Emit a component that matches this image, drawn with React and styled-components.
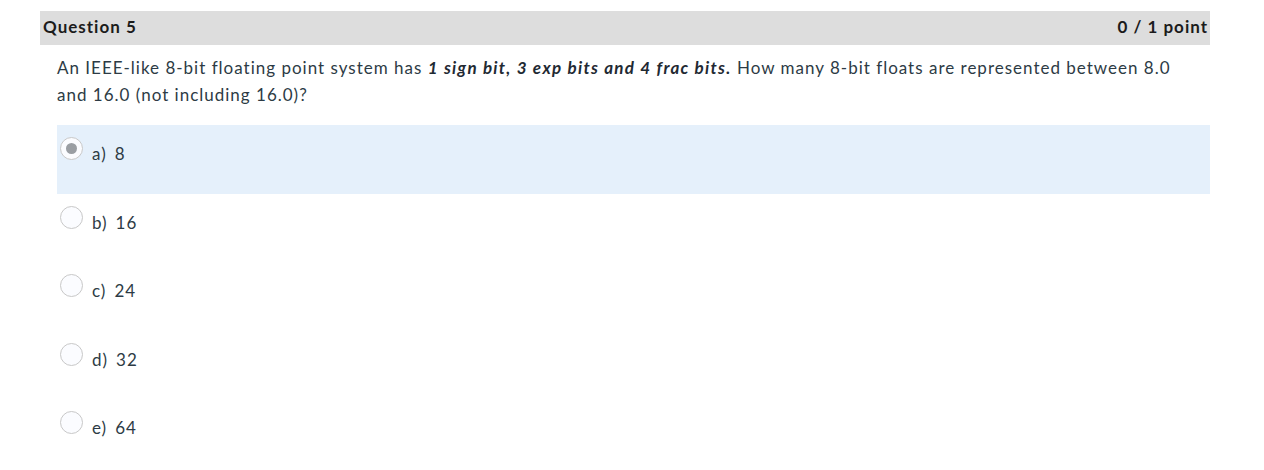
import React from 'react'
import styled, { createGlobalStyle } from 'styled-components'

const GlobalStyle = createGlobalStyle`
  body {
    margin: 0;
    background: #fff;
    font-family: Lato, "Liberation Sans", sans-serif;
    font-variant-ligatures: none;
    color: #2d3b45;
  }
`;

const Quiz = styled.div`
  width: 1170px;
  margin: 11px 0 0 40px;
`;

const Header = styled.div`
  display: flex;
  justify-content: space-between;
  align-items: center;
  height: 34px;
  box-sizing: border-box;
  padding: 0 2px 3px 3px;
  background: #dddddd;
  color: #1b1b1b;
  font-size: 17px;
  font-weight: 700;
  letter-spacing: 1px;
`;

const Body = styled.div`
  padding: 9px 0 0 17px;
`;

const QuestionText = styled.p`
  margin: 0 0 17px;
  padding-right: 20px;
  font-size: 17px;
  line-height: 27px;
  letter-spacing: 1px;
  & b {
    font-weight: 700;
    font-style: italic;
    letter-spacing: 1.3px;
    color: #1f2a33;
  }
`;

const Answer = styled.label`
  display: flex;
  align-items: flex-start;
  gap: 9px;
  height: 68.5px;
  box-sizing: border-box;
  padding: 11px 0 0 3px;
  font-size: 17px;
  line-height: 27px;
  letter-spacing: 1px;
  background: ${(p) => (p.selected ? '#e5f0fb' : 'transparent')};
`;

const Radio = styled.span`
  position: relative;
  width: 21px;
  height: 21px;
  margin-top: 1px;
  border: 1px solid #c8c8c8;
  border-radius: 50%;
  background: #fbfcff;
  flex-shrink: 0;
  &::after {
    content: '';
    display: ${(p) => (p.checked ? 'block' : 'none')};
    position: absolute;
    left: 5px;
    top: 5px;
    width: 11px;
    height: 11px;
    border-radius: 50%;
    background: #9a9ea3;
  }
`;

const Label = styled.span`
  margin-top: 4px;
`;

const Letter = styled.span`
  margin-right: 8px;
`;

const answers = [
  { letter: 'a)', value: '8', selected: true },
  { letter: 'b)', value: '16' },
  { letter: 'c)', value: '24' },
  { letter: 'd)', value: '32' },
  { letter: 'e)', value: '64' },
];

const App = () => {
  return (
    <>
      <GlobalStyle />
      <Quiz>
        <Header>
          <span>Question 5</span>
          <span>0 / 1 point</span>
        </Header>
        <Body>
          <QuestionText>
            An IEEE-like 8-bit floating point system has{' '}
            <b>1 sign bit, 3 exp bits and 4 frac bits.</b> How many 8-bit floats are
            represented between 8.0 and 16.0 (not including 16.0)?
          </QuestionText>
          {answers.map((a) => (
            <Answer key={a.letter} selected={a.selected}>
              <Radio checked={a.selected} />
              <Label>
                <Letter>{a.letter}</Letter>
                {a.value}
              </Label>
            </Answer>
          ))}
        </Body>
      </Quiz>
    </>
  )
}

export default App
